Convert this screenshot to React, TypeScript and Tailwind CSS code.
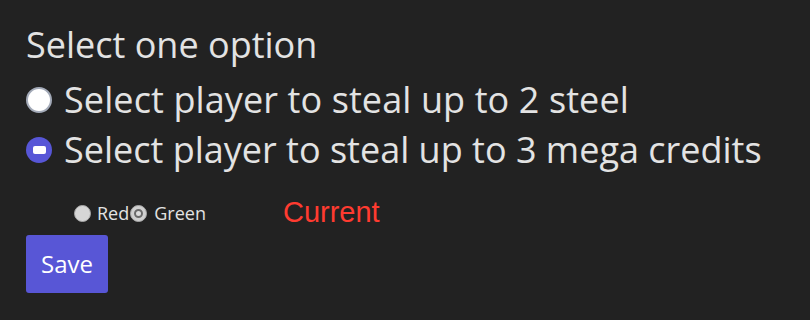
import React from "react";

export default function App() {
  return (
    <div className="w-[810px] h-[320px] bg-[#222222] pl-[26px] pt-[20px] text-[#e3e3e3] font-['Open_Sans',sans-serif] overflow-hidden">
      <div className="text-[36px] leading-[50px]">Select one option</div>
      <div className="flex items-center gap-[12px] h-[50px] mt-[5px]">
        <div className="w-[26px] h-[26px] rounded-full bg-white border-2 border-[#a3aab8]" />
        <span className="text-[36px] leading-[50px] tracking-[0.1px]">Select player to steal up to 2 steel</span>
      </div>
      <div className="flex items-center gap-[12px] h-[50px]">
        <div className="w-[26px] h-[26px] rounded-full bg-[#5756d7] flex items-center justify-center">
          <div className="w-[13px] h-[8px] rounded-[2px] bg-white" />
        </div>
        <span className="text-[36px] leading-[50px]">Select player to steal up to 3 mega credits</span>
      </div>
      <div className="flex items-center h-[36px] mt-[20px] pl-[48px]">
        <div className="w-[17px] h-[17px] rounded-full bg-[#d6d6d6] border border-[#a8a8a8]" />
        <span className="ml-[6px] text-[18px]">Red</span>
        <div className="ml-[1px] w-[17px] h-[17px] rounded-full bg-[#d0d0d0] border border-[#a8a8a8] flex items-center justify-center">
          <div className="w-[9px] h-[9px] rounded-full border-2 border-[#6a6a6a] bg-[#dcdcdc]" />
        </div>
        <span className="ml-[7px] text-[18px]">Green</span>
        <span className="ml-[77px] text-[29px] text-[#ff3b30] font-['Liberation_Sans',sans-serif]">Current</span>
      </div>
      <button className="mt-[4px] w-[82px] h-[58px] rounded-[3px] bg-[#5856d6] text-white text-[24px] font-medium flex items-center justify-center">
        Save
      </button>
    </div>
  );
}
